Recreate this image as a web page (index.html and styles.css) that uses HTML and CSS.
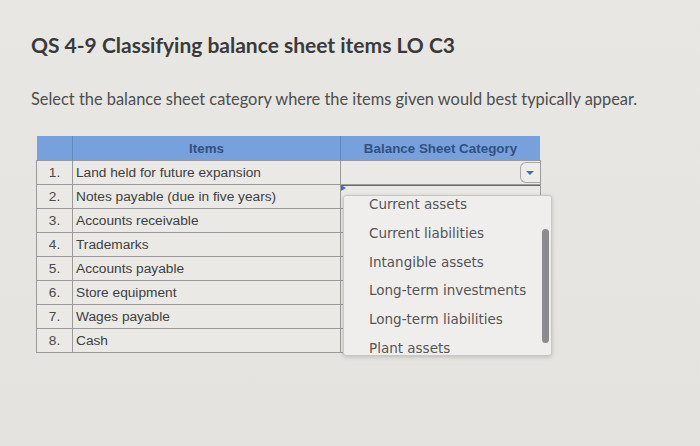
FILE: index.html
```html
<!DOCTYPE html>
<html>
<head>
<meta charset="utf-8">
<link rel="stylesheet" href="styles.css">
</head>
<body>
<div class="page">
  <h1 class="title">QS 4-9 Classifying balance sheet items LO C3</h1>
  <p class="lead">Select the balance sheet category where the items given would best typically appear.</p>
  <div class="table-wrap">
    <table class="grid">
      <thead>
        <tr><th class="num"></th><th class="item">Items</th><th class="cat">Balance Sheet Category</th></tr>
      </thead>
      <tbody>
        <tr><td class="num">1.</td><td>Land held for future expansion</td><td class="sel"><span class="btn"><svg width="10" height="6" viewBox="0 0 10 6"><path d="M1 1 L9 1 L5 5 Z" fill="#3d6fb8"/></svg></span></td></tr>
        <tr><td class="num">2.</td><td>Notes payable (due in five years)</td><td class="sel focus"><span class="mark"></span></td></tr>
        <tr><td class="num">3.</td><td>Accounts receivable</td><td></td></tr>
        <tr><td class="num">4.</td><td>Trademarks</td><td></td></tr>
        <tr><td class="num">5.</td><td>Accounts payable</td><td></td></tr>
        <tr><td class="num">6.</td><td>Store equipment</td><td></td></tr>
        <tr><td class="num">7.</td><td>Wages payable</td><td></td></tr>
        <tr><td class="num">8.</td><td>Cash</td><td></td></tr>
      </tbody>
    </table>
    <div class="popup">
      <span class="caret"></span>
      <ul class="options">
        <li>Current assets</li>
        <li>Current liabilities</li>
        <li>Intangible assets</li>
        <li>Long-term investments</li>
        <li>Long-term liabilities</li>
        <li>Plant assets</li>
      </ul>
      <span class="thumb"></span>
    </div>
  </div>
</div>
</body>
</html>
```
FILE: styles.css
```css
html, body {
  margin: 0;
  padding: 0;
  background: #e5e4e0;
}
.page {
  width: 700px;
  height: 446px;
  padding: 33px 0 0 31px;
  box-sizing: border-box;
  background: linear-gradient(180deg, #e8e7e3 0%, #e4e3df 100%);
}
.title {
  margin: 0;
  font-family: Lato, "Liberation Sans", sans-serif;
  font-weight: 700;
  font-size: 21px;
  line-height: 24px;
  color: #3a3a3a;
}
.lead {
  margin: 32px 0 0 0;
  font-family: Lato, "Liberation Sans", sans-serif;
  font-size: 16.4px;
  line-height: 20px;
  color: #4e4e4e;
}
.table-wrap {
  position: relative;
  margin: 27px 0 0 5px;
  width: 520px;
}
.grid {
  border-collapse: collapse;
  font-family: "Liberation Sans", Arial, sans-serif;
  font-size: 13.7px;
  color: #404040;
}
.grid th {
  background: #76a1dc;
  height: 24px;
  padding: 0;
  font-weight: 700;
  font-size: 13.4px;
  color: #34507e;
  border-left: 1px solid #5f87c0;
}
.grid th:first-child { border-left: none; }
.grid td {
  height: 23px;
  padding: 0 0 0 3px;
  border: 1px solid #9a9a9a;
  background: #eae9e5;
}
.grid td.num {
  text-align: center;
  padding: 0;
  color: #4a4a4a;
}
.num { width: 35px; }
.item { width: 267px; }
.cat { width: 199px; }
.grid td.sel {
  position: relative;
  padding: 0;
}
.btn {
  position: absolute;
  right: 0;
  top: 1px;
  bottom: 1px;
  width: 19px;
  border: 1px solid #a8a8a8;
  border-right: none;
  border-radius: 6px 0 0 6px;
  background: #edecea;
  display: flex;
  align-items: center;
  justify-content: center;
}
.grid td.focus {
  border-top-color: #5e5e5e;
  box-shadow: inset 0 1px 0 #6a6a6a;
}
.mark {
  position: absolute;
  left: 0;
  top: 0;
  width: 0;
  height: 0;
  border-top: 3px solid transparent;
  border-bottom: 3px solid transparent;
  border-left: 5px solid #3d6fd0;
}
.popup {
  position: absolute;
  left: 307px;
  top: 59px;
  width: 207px;
  height: 159px;
  background: #efeeec;
  border: 1px solid #c8c7c4;
  border-radius: 3px;
  box-shadow: 0 1px 4px rgba(0,0,0,0.18);
  font-family: "DejaVu Sans", Verdana, sans-serif;
  font-size: 13.5px;
  color: #555;
  overflow: hidden;
}
.caret {
  position: absolute;
  left: 19px;
  top: -6px;
  width: 10px;
  height: 10px;
  background: #efeeec;
  border-left: 1px solid #c8c7c4;
  border-top: 1px solid #c8c7c4;
  transform: rotate(45deg);
}
.options {
  list-style: none;
  margin: 0;
  padding: 0 0 0 25px;
}
.options li {
  height: 28.8px;
  line-height: 16px;
}
.thumb {
  position: absolute;
  right: 2px;
  top: 33px;
  width: 7px;
  height: 114px;
  border-radius: 4px;
  background: #8c8b8e;
}
```
